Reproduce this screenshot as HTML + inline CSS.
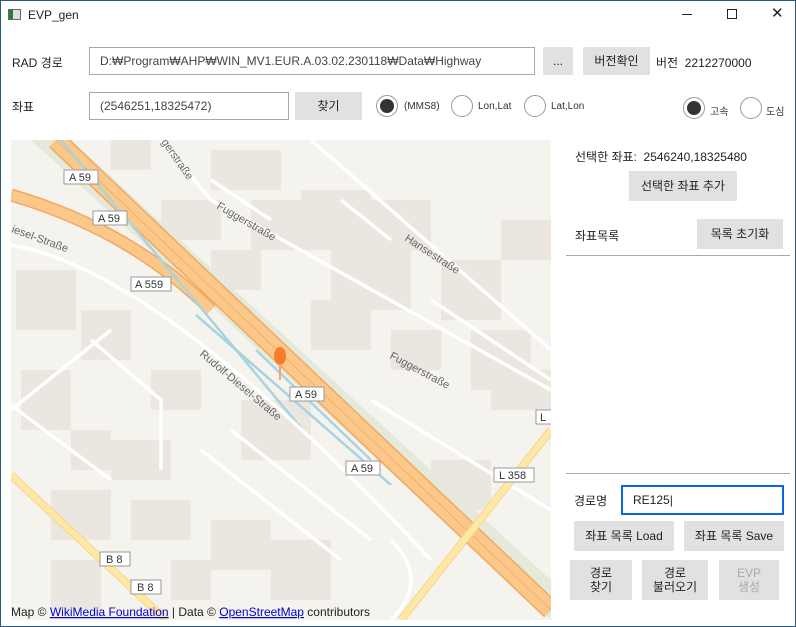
<!DOCTYPE html>
<html><head><meta charset="utf-8"><style>
*{margin:0;padding:0;box-sizing:border-box}
body{width:796px;height:627px;background:#fff;font-family:"Liberation Sans","Noto Sans CJK KR",sans-serif;font-size:12px;color:#222;position:relative;overflow:hidden}
.win{position:absolute;left:0;top:0;width:796px;height:627px;border:1px solid #2a5a80}
.a{position:absolute}
.btn{position:absolute;background:#e1e1e1;text-align:center;font-size:12px;color:#222;display:flex;align-items:center;justify-content:center;line-height:14px}
.inp{position:absolute;border:1px solid #a8a8a8;background:#fff;padding-left:10px;display:flex;align-items:center;color:#444}
.rad{position:absolute;width:22px;height:22px;border-radius:50%;border:1px solid #999;background:#fff}
.rad.on::after{content:"";position:absolute;left:3px;top:3px;width:14px;height:14px;border-radius:50%;background:#333}
.rl{position:absolute;font-size:10px;color:#333}
</style></head><body>
<div class="win"></div>
<div class="a" style="left:8px;top:9px;width:13px;height:11px;border:1px solid #666;background:linear-gradient(90deg,#2a7a3a 0 4px,#ddd 4px)"></div>
<div class="a" style="left:28px;top:8px;font-size:12px">EVP_gen</div>
<div class="a" style="left:682px;top:14px;width:10px;height:1px;background:#222"></div>
<div class="a" style="left:727px;top:9px;width:10px;height:10px;border:1px solid #222"></div>
<div class="a" style="left:771px;top:4px;font-size:15px">✕</div>

<div class="a" style="left:12px;top:54px">RAD 경로</div>
<div class="inp" style="left:89px;top:47px;width:446px;height:28px">D:₩Program₩AHP₩WIN_MV1.EUR.A.03.02.230118₩Data₩Highway</div>
<div class="btn" style="left:543px;top:47px;width:30px;height:28px">...</div>
<div class="btn" style="left:583px;top:47px;width:67px;height:28px">버전확인</div>
<div class="a" style="left:656px;top:54px">버전 &nbsp;2212270000</div>

<div class="a" style="left:12px;top:98px">좌표</div>
<div class="inp" style="left:89px;top:92px;width:200px;height:28px">(2546251,18325472)</div>
<div class="btn" style="left:295px;top:92px;width:67px;height:28px">찾기</div>
<div class="rad on" style="left:376px;top:95px"></div><div class="rl" style="left:404px;top:101px">(MMS8)</div>
<div class="rad" style="left:451px;top:95px"></div><div class="rl" style="left:478px;top:101px">Lon,Lat</div>
<div class="rad" style="left:524px;top:95px"></div><div class="rl" style="left:551px;top:101px">Lat,Lon</div>
<div class="rad on" style="left:683px;top:97px"></div><div class="rl" style="left:710px;top:103px">고속</div>
<div class="rad" style="left:740px;top:97px"></div><div class="rl" style="left:766px;top:103px">도심</div>

<svg class="a" style="left:11px;top:140px" width="540" height="480" viewBox="0 0 540 480">
<rect width="540" height="480" fill="#f5f3ee"/>
<g fill="#ece6e0">
<rect x="150" y="60" width="60" height="40"/><rect x="200" y="10" width="70" height="40"/><rect x="240" y="60" width="60" height="50"/><rect x="200" y="110" width="50" height="40"/>
<rect x="290" y="50" width="70" height="60"/><rect x="320" y="110" width="80" height="60"/><rect x="360" y="60" width="60" height="50"/><rect x="430" y="120" width="60" height="60"/>
<rect x="300" y="160" width="60" height="50"/><rect x="380" y="190" width="50" height="40"/><rect x="460" y="190" width="60" height="60"/><rect x="490" y="80" width="50" height="40"/>
<rect x="5" y="130" width="60" height="60"/><rect x="70" y="170" width="50" height="50"/><rect x="10" y="230" width="50" height="60"/><rect x="60" y="290" width="40" height="40"/>
<rect x="140" y="230" width="50" height="40"/><rect x="100" y="300" width="60" height="40"/><rect x="40" y="350" width="60" height="50"/><rect x="120" y="360" width="60" height="40"/>
<rect x="230" y="260" width="70" height="60"/><rect x="200" y="380" width="60" height="50"/><rect x="260" y="400" width="60" height="60"/><rect x="160" y="420" width="40" height="40"/>
<rect x="420" y="320" width="60" height="50"/><rect x="480" y="230" width="60" height="40"/><rect x="100" y="0" width="40" height="30"/><rect x="40" y="420" width="50" height="50"/>
</g>
<path d="M60 0 L540 440 L540 480 L20 0Z" fill="#e4e9da"/>
<path d="M0 55 Q120 90 200 170" stroke="#f0a862" stroke-width="13" fill="none"/>
<path d="M0 55 Q120 90 200 170" stroke="#fcc88a" stroke-width="10" fill="none"/>
<path d="M45 0 L540 470" stroke="#f0a862" stroke-width="20" fill="none"/>
<path d="M45 0 L540 470" stroke="#fcc88a" stroke-width="17" fill="none"/>
<path d="M45 0 L540 470" stroke="#f0b070" stroke-width="1" fill="none"/>
<path d="M50 0 L300 300" stroke="#a8d4e0" stroke-width="2.5" fill="none"/>
<path d="M185 175 L380 345" stroke="#a8d4e0" stroke-width="2.5" fill="none"/>
<path d="M245 210 L360 320" stroke="#a8d4e0" stroke-width="2.5" fill="none"/>
<g stroke="#fff" stroke-width="3.5" fill="none">
<path d="M150 0 L200 60 L540 250"/><path d="M300 0 L540 210"/><path d="M0 105 Q150 130 420 420"/>
<path d="M0 270 L100 190"/><path d="M80 200 L150 260 L150 330"/><path d="M0 265 L100 340"/>
<path d="M360 260 L540 370"/><path d="M200 40 L260 80"/><path d="M380 400 Q420 440 380 480"/>
<path d="M220 290 L360 400"/><path d="M190 310 L330 420"/><path d="M330 60 L380 100"/><path d="M420 160 L540 240"/>
</g>
<path d="M540 290 L390 480" stroke="#f8d58a" stroke-width="8" fill="none"/>
<path d="M540 290 L390 480" stroke="#fde8a5" stroke-width="6" fill="none"/>
<path d="M0 335 L155 480" stroke="#f8d58a" stroke-width="8" fill="none"/>
<path d="M0 335 L155 480" stroke="#fde8a5" stroke-width="6" fill="none"/>
<g font-family="Liberation Sans,sans-serif" font-size="11" fill="#666">
<text x="150" y="2" transform="rotate(55 150 2)">gerstraße</text>
<text x="205" y="68" transform="rotate(30 205 68)">Fuggerstraße</text>
<text x="393" y="100" transform="rotate(33 393 100)">Hansestraße</text>
<text x="378" y="218" transform="rotate(28 378 218)">Fuggerstraße</text>
<text x="188" y="215" transform="rotate(40 188 215)">Rudolf-Diesel-Straße</text>
<text x="0" y="92" transform="rotate(20 0 92)">iesel-Straße</text>
</g>
<g font-family="Liberation Sans,sans-serif" font-size="11" fill="#333">
<rect x="53" y="30" width="34" height="14" fill="#fff" stroke="#999"/><text x="58" y="41">A 59</text>
<rect x="82" y="71" width="34" height="14" fill="#fff" stroke="#999"/><text x="87" y="82">A 59</text>
<rect x="120" y="137" width="40" height="14" fill="#fff" stroke="#999"/><text x="124" y="148">A 559</text>
<rect x="279" y="247" width="34" height="14" fill="#fff" stroke="#999"/><text x="284" y="258">A 59</text>
<rect x="335" y="321" width="34" height="14" fill="#fff" stroke="#999"/><text x="340" y="332">A 59</text>
<rect x="483" y="328" width="40" height="14" fill="#fff" stroke="#999"/><text x="488" y="339">L 358</text>
<rect x="525" y="270" width="20" height="14" fill="#fff" stroke="#999"/><text x="529" y="281">L</text>
<rect x="89" y="412" width="30" height="14" fill="#fff" stroke="#999"/><text x="95" y="423">B 8</text>
<rect x="120" y="440" width="30" height="14" fill="#fff" stroke="#999"/><text x="126" y="451">B 8</text>
</g>
<ellipse cx="269" cy="216" rx="6" ry="9" fill="#f77b2a"/>
<line x1="269" y1="224" x2="269" y2="240" stroke="#f9a070" stroke-width="2"/>
<text x="0" y="476" font-family="Liberation Sans,sans-serif" font-size="12" fill="#222">Map © <tspan fill="#00c" text-decoration="underline">WikiMedia Foundation</tspan> | Data © <tspan fill="#00c" text-decoration="underline">OpenStreetMap</tspan> contributors</text>
</svg>

<div class="a" style="left:575px;top:148px">선택한 좌표: &nbsp;2546240,18325480</div>
<div class="btn" style="left:629px;top:171px;width:108px;height:30px">선택한 좌표 추가</div>
<div class="a" style="left:575px;top:227px">좌표목록</div>
<div class="btn" style="left:697px;top:219px;width:86px;height:30px">목록 초기화</div>
<div class="a" style="left:566px;top:255px;width:224px;height:1px;background:#aaa"></div>
<div class="a" style="left:566px;top:473px;width:224px;height:1px;background:#aaa"></div>
<div class="a" style="left:574px;top:492px">경로명</div>
<div class="inp" style="left:621px;top:485px;width:163px;height:30px;border:2px solid #0a64e6;color:#222">RE125|</div>
<div class="btn" style="left:574px;top:521px;width:100px;height:30px">좌표 목록 Load</div>
<div class="btn" style="left:684px;top:521px;width:100px;height:30px">좌표 목록 Save</div>
<div class="btn" style="left:570px;top:560px;width:62px;height:40px">경로<br>찾기</div>
<div class="btn" style="left:642px;top:560px;width:66px;height:40px">경로<br>불러오기</div>
<div class="btn" style="left:719px;top:560px;width:60px;height:40px;color:#aaa">EVP<br>생성</div>
</body></html>
